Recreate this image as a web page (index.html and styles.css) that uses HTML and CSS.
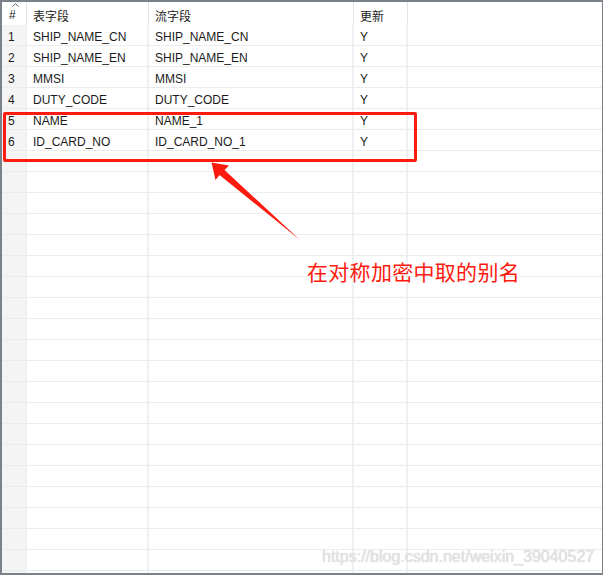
FILE: index.html
```html
<!DOCTYPE html>
<html lang="zh">
<head>
<meta charset="utf-8">
<link rel="stylesheet" href="styles.css">
</head>
<body>
<div class="frame">
  <div class="grid">
    <div class="row head">
      <div class="c num"><svg class="caret" width="7" height="4" viewBox="0 0 7 4"><path d="M0.5 3.5 L3.5 0.7 L6.5 3.5" fill="none" stroke="#666" stroke-width="1"/></svg>#</div>
      <div class="c c1">表字段</div>
      <div class="c c2">流字段</div>
      <div class="c c3">更新</div>
      <div class="c c4"></div>
    </div>
    <div class="row"><div class="c num">1</div><div class="c c1">SHIP_NAME_CN</div><div class="c c2">SHIP_NAME_CN</div><div class="c c3">Y</div><div class="c c4"></div></div>
    <div class="row"><div class="c num">2</div><div class="c c1">SHIP_NAME_EN</div><div class="c c2">SHIP_NAME_EN</div><div class="c c3">Y</div><div class="c c4"></div></div>
    <div class="row"><div class="c num">3</div><div class="c c1">MMSI</div><div class="c c2">MMSI</div><div class="c c3">Y</div><div class="c c4"></div></div>
    <div class="row"><div class="c num">4</div><div class="c c1">DUTY_CODE</div><div class="c c2">DUTY_CODE</div><div class="c c3">Y</div><div class="c c4"></div></div>
    <div class="row"><div class="c num">5</div><div class="c c1">NAME</div><div class="c c2">NAME_1</div><div class="c c3">Y</div><div class="c c4"></div></div>
    <div class="row"><div class="c num">6</div><div class="c c1">ID_CARD_NO</div><div class="c c2">ID_CARD_NO_1</div><div class="c c3">Y</div><div class="c c4"></div></div>
    <div class="row"><div class="c num"></div><div class="c c1"></div><div class="c c2"></div><div class="c c3"></div><div class="c c4"></div></div>
    <div class="row"><div class="c num"></div><div class="c c1"></div><div class="c c2"></div><div class="c c3"></div><div class="c c4"></div></div>
    <div class="row"><div class="c num"></div><div class="c c1"></div><div class="c c2"></div><div class="c c3"></div><div class="c c4"></div></div>
    <div class="row"><div class="c num"></div><div class="c c1"></div><div class="c c2"></div><div class="c c3"></div><div class="c c4"></div></div>
    <div class="row"><div class="c num"></div><div class="c c1"></div><div class="c c2"></div><div class="c c3"></div><div class="c c4"></div></div>
    <div class="row"><div class="c num"></div><div class="c c1"></div><div class="c c2"></div><div class="c c3"></div><div class="c c4"></div></div>
    <div class="row"><div class="c num"></div><div class="c c1"></div><div class="c c2"></div><div class="c c3"></div><div class="c c4"></div></div>
    <div class="row"><div class="c num"></div><div class="c c1"></div><div class="c c2"></div><div class="c c3"></div><div class="c c4"></div></div>
    <div class="row"><div class="c num"></div><div class="c c1"></div><div class="c c2"></div><div class="c c3"></div><div class="c c4"></div></div>
    <div class="row"><div class="c num"></div><div class="c c1"></div><div class="c c2"></div><div class="c c3"></div><div class="c c4"></div></div>
    <div class="row"><div class="c num"></div><div class="c c1"></div><div class="c c2"></div><div class="c c3"></div><div class="c c4"></div></div>
    <div class="row"><div class="c num"></div><div class="c c1"></div><div class="c c2"></div><div class="c c3"></div><div class="c c4"></div></div>
    <div class="row"><div class="c num"></div><div class="c c1"></div><div class="c c2"></div><div class="c c3"></div><div class="c c4"></div></div>
    <div class="row"><div class="c num"></div><div class="c c1"></div><div class="c c2"></div><div class="c c3"></div><div class="c c4"></div></div>
    <div class="row"><div class="c num"></div><div class="c c1"></div><div class="c c2"></div><div class="c c3"></div><div class="c c4"></div></div>
    <div class="row"><div class="c num"></div><div class="c c1"></div><div class="c c2"></div><div class="c c3"></div><div class="c c4"></div></div>
    <div class="row"><div class="c num"></div><div class="c c1"></div><div class="c c2"></div><div class="c c3"></div><div class="c c4"></div></div>
    <div class="row"><div class="c num"></div><div class="c c1"></div><div class="c c2"></div><div class="c c3"></div><div class="c c4"></div></div>
    <div class="row"><div class="c num"></div><div class="c c1"></div><div class="c c2"></div><div class="c c3"></div><div class="c c4"></div></div>
    <div class="row"><div class="c num"></div><div class="c c1"></div><div class="c c2"></div><div class="c c3"></div><div class="c c4"></div></div>
    <div class="row"><div class="c num"></div><div class="c c1"></div><div class="c c2"></div><div class="c c3"></div><div class="c c4"></div></div>
  </div>

  <div class="highlight"></div>
  <svg class="arrow" width="603" height="575" viewBox="0 0 603 575">
    <polygon points="211.5,162.5 229,165.5 224.5,170 300,240 219.5,175 215.5,180" fill="#ff1a10"/>
  </svg>
  <div class="note">在对称加密中取的别名</div>
  <div class="watermark">https://blog.csdn.net/weixin_39040527</div>
</div>
</body>
</html>
```

FILE: styles.css
```css
html, body {
  margin: 0;
  padding: 0;
  background: #ffffff;
}

.frame {
  position: relative;
  width: 603px;
  height: 575px;
  box-sizing: border-box;
  border: 2px solid #7b8188;
  border-right-width: 1px;
  overflow: hidden;
  font-family: "Liberation Sans", "Noto Sans CJK SC", sans-serif;
  font-size: 12px;
  color: #1b1b1b;
}

.grid {
  display: flex;
  flex-direction: column;
}

.row {
  display: flex;
  height: 21px;
  box-sizing: border-box;
  border-bottom: 1px solid #ececec;
  flex-shrink: 0;
}

.row.head {
  height: 23px;
  border-bottom: none;
}

.c {
  box-sizing: border-box;
  display: flex;
  align-items: center;
  white-space: nowrap;
  border-right: 2px solid #edf0f5;
  height: 100%;
  padding-top: 3px;
}

.num {
  width: 25px;
  padding-left: 6px;
  background: #f4f4f4;
  position: relative;
}

.c1 { width: 122px; padding-left: 6px; }
.c2 { width: 205px; padding-left: 6px; }
.c3 { width: 54px; padding-left: 6px; }
.c4 { flex: 1; border-right: none; }

.head .c {
  background: #ffffff;
  border-right: 1px solid #e2e2e2;
  padding-top: 3px;
}
.head .num { width: 25px; padding-left: 7px; }
.head .c1 { width: 122px; }
.head .c2 { width: 205px; }
.head .c3 { width: 54px; }
.head .c4 { border-right: none; }

.caret {
  position: absolute;
  left: 10px;
  top: 1px;
}

.highlight {
  position: absolute;
  left: 1px;
  top: 110px;
  width: 414px;
  height: 50px;
  box-sizing: border-box;
  border: 3px solid #ff1a10;
  border-radius: 2px;
}

.arrow {
  position: absolute;
  left: -2px;
  top: -2px;
}

.note {
  position: absolute;
  left: 305px;
  top: 255px;
  font-family: "Noto Sans CJK SC", sans-serif;
  font-size: 21px;
  line-height: 28px;
  color: #ff1a10;
  letter-spacing: 0.3px;
}

.watermark {
  position: absolute;
  left: 320px;
  top: 545px;
  font-family: "Liberation Sans", sans-serif;
  font-size: 16px;
  line-height: 20px;
  color: #e4e4e4;
  text-shadow: 0 0 1px #c8c8c8;
  white-space: nowrap;
}
```
